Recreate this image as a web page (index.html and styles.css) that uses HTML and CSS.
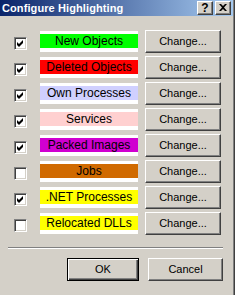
FILE: index.html
```html
<!DOCTYPE html>
<html>
<head>
<meta charset="utf-8">
<title>Configure Highlighting</title>
<link rel="stylesheet" href="styles.css">
</head>
<body>
<div class="dialog">
  <div class="frame">
    <div class="titlebar">
      <span class="title">Configure Highlighting</span>
      <div class="caps">
        <span class="cap help">?</span>
        <span class="cap close"><svg width="8" height="7" viewBox="0 0 8 7"><path d="M0 0 H2 L4 2 L6 0 H8 L5 3.5 L8 7 H6 L4 5 L2 7 H0 L3 3.5 Z" fill="#000"/></svg></span>
      </div>
    </div>
    <div class="content">
      <div class="rows">
        <div class="row">
          <span class="check"><svg width="9" height="9" viewBox="0 0 9 9"><path d="M1 3 L3 5 L7 1 L7 4 L3 8 L1 6 Z" fill="#000"/></svg></span>
          <div class="swatch"><div class="band c-new">New Objects</div></div>
          <button class="btn change">Change...</button>
        </div>
        <div class="row">
          <span class="check"><svg width="9" height="9" viewBox="0 0 9 9"><path d="M1 3 L3 5 L7 1 L7 4 L3 8 L1 6 Z" fill="#000"/></svg></span>
          <div class="swatch"><div class="band c-deleted">Deleted Objects</div></div>
          <button class="btn change">Change...</button>
        </div>
        <div class="row">
          <span class="check"><svg width="9" height="9" viewBox="0 0 9 9"><path d="M1 3 L3 5 L7 1 L7 4 L3 8 L1 6 Z" fill="#000"/></svg></span>
          <div class="swatch"><div class="band c-own">Own Processes</div></div>
          <button class="btn change">Change...</button>
        </div>
        <div class="row">
          <span class="check"><svg width="9" height="9" viewBox="0 0 9 9"><path d="M1 3 L3 5 L7 1 L7 4 L3 8 L1 6 Z" fill="#000"/></svg></span>
          <div class="swatch"><div class="band c-services">Services</div></div>
          <button class="btn change">Change...</button>
        </div>
        <div class="row">
          <span class="check"><svg width="9" height="9" viewBox="0 0 9 9"><path d="M1 3 L3 5 L7 1 L7 4 L3 8 L1 6 Z" fill="#000"/></svg></span>
          <div class="swatch"><div class="band c-packed">Packed Images</div></div>
          <button class="btn change">Change...</button>
        </div>
        <div class="row">
          <span class="check"></span>
          <div class="swatch"><div class="band c-jobs">Jobs</div></div>
          <button class="btn change">Change...</button>
        </div>
        <div class="row">
          <span class="check"><svg width="9" height="9" viewBox="0 0 9 9"><path d="M1 3 L3 5 L7 1 L7 4 L3 8 L1 6 Z" fill="#000"/></svg></span>
          <div class="swatch"><div class="band c-net">.NET Processes</div></div>
          <button class="btn change">Change...</button>
        </div>
        <div class="row">
          <span class="check"></span>
          <div class="swatch"><div class="band c-reloc">Relocated DLLs</div></div>
          <button class="btn change">Change...</button>
        </div>
      </div>
      <div class="sep"></div>
      <div class="actions">
        <button class="btn ok">OK</button>
        <button class="btn cancel">Cancel</button>
      </div>
    </div>
  </div>
</div>
</body>
</html>
```

FILE: styles.css
```css
* { box-sizing: border-box; }

body {
  margin: 0;
  font-family: "Liberation Sans", Arial, sans-serif;
  font-size: 11px;
  color: #000;
}

.dialog {
  width: 235px;
  height: 295px;
  background: #d4d0c8;
  border-right: 1px solid #404040;
  overflow: hidden;
}

.frame {
  height: 100%;
  border-right: 1px solid #808080;
}

.titlebar {
  height: 16px;
  background: linear-gradient(to right, #0a246a, #a6caf0);
  display: flex;
  align-items: center;
  justify-content: space-between;
  padding: 0 2px 0 2px;
}

.title {
  color: #fff;
  font-weight: bold;
  font-size: 11px;
  letter-spacing: 0.1px;
}

.caps {
  display: flex;
  gap: 2px;
}

.cap {
  width: 16px;
  height: 14px;
  background: #d4d0c8;
  border-top: 1px solid #fff;
  border-left: 1px solid #fff;
  border-right: 1px solid #404040;
  border-bottom: 1px solid #404040;
  box-shadow: inset -1px -1px #808080;
  display: flex;
  align-items: center;
  justify-content: center;
  font-weight: bold;
  font-size: 12px;
  line-height: 1;
  padding-bottom: 1px;
}

.content {
  padding-top: 14px;
}

.rows {
  display: flex;
  flex-direction: column;
}

.row {
  height: 26px;
  display: flex;
  align-items: flex-start;
  padding-left: 14px;
}

.check {
  width: 13px;
  height: 13px;
  margin-top: 7px;
  background: #fff;
  border-top: 1px solid #808080;
  border-left: 1px solid #808080;
  border-right: 1px solid #fff;
  border-bottom: 1px solid #fff;
  box-shadow: inset 1px 1px #404040, inset -1px -1px #d4d0c8;
  display: flex;
  align-items: center;
  justify-content: center;
}

.check svg { display: block; }

.swatch {
  width: 98px;
  height: 21px;
  margin-left: 13px;
  margin-top: 1px;
  background: #fff;
  padding-top: 3px;
}

.band {
  height: 14px;
  line-height: 14px;
  text-align: center;
  font-size: 12px;
  white-space: nowrap;
  overflow: hidden;
}

.c-new { background: #00ff00; }
.c-deleted { background: #ff0000; }
.c-own { background: #d0d0ff; }
.c-services { background: #ffd0d0; }
.c-packed { background: #d000d0; }
.c-jobs { background: #d06a00; }
.c-net { background: #ffff00; }
.c-reloc { background: #ffff00; }

.btn {
  font-family: "Liberation Sans", Arial, sans-serif;
  font-size: 11px;
  color: #000;
  background: #d4d0c8;
  border-top: 1px solid #fff;
  border-left: 1px solid #fff;
  border-right: 1px solid #404040;
  border-bottom: 1px solid #404040;
  box-shadow: inset -1px -1px #808080;
  padding: 0;
  margin: 0;
  height: 23px;
  line-height: 1;
}

.change {
  width: 76px;
  margin-left: 7px;
}

.sep {
  margin: 9px 0 0 8px;
  width: 215px;
  border-top: 1px solid #808080;
  border-bottom: 1px solid #fff;
}

.actions {
  display: flex;
  padding-left: 67px;
  margin-top: 9px;
  gap: 9px;
}

.ok {
  width: 72px;
  border: 1px solid #000;
  box-shadow: inset 1px 1px #fff, inset -1px -1px #404040, inset -2px -2px #808080;
}

.cancel {
  width: 75px;
}
```
